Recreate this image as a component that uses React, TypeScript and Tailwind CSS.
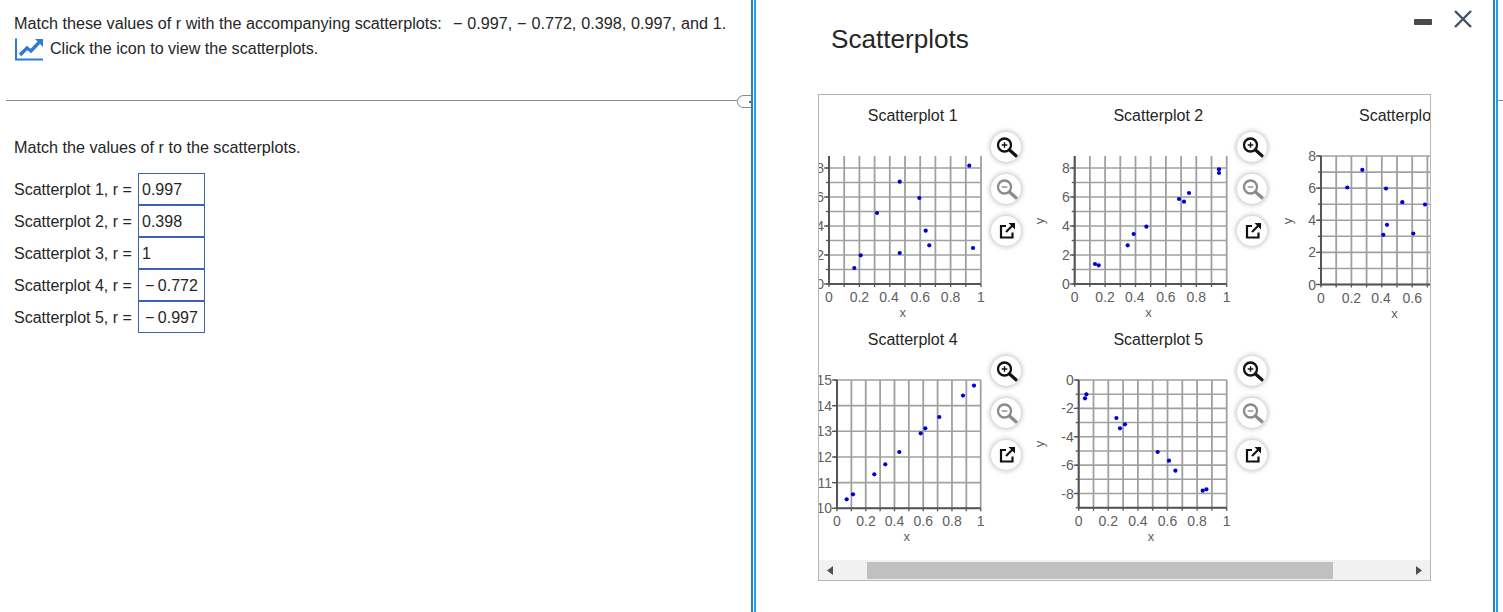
import React from "react";

type Pt = [number, number];
type ChartProps = {
  x0: number;
  w: number;
  h: number;
  vLines: number[];
  hLines: number[];
  yLabels: { y: number; t: string }[];
  xTicks: { x: number; t: string }[];
  pts: Pt[];
  yLabelX?: number;
  yLabelY: number;
  xLabelX: number;
};

const TOP = 26;
const gridColor = "#a0a0a0";
const axisColor = "#555555";
const labelColor = "#606060";

function Chart({ x0, w, h, vLines, hLines, yLabels, xTicks, pts, yLabelX, yLabelY, xLabelX }: ChartProps) {
  const bottom = TOP + h;
  return (
    <svg width="202" height="190" viewBox="0 0 202 190" className="shrink-0" style={{ fontFamily: '"Liberation Sans", Arial, sans-serif' }}>
      {vLines.map((v, i) => (
        <g key={i}>
          <line x1={x0 + v} x2={x0 + v} y1={TOP} y2={bottom} stroke={gridColor} strokeWidth="1.8" />
          <line x1={x0 + v} x2={x0 + v} y1={bottom} y2={bottom + 3} stroke={axisColor} strokeWidth="1.3" />
        </g>
      ))}
      {hLines.map((v, i) => (
        <g key={i}>
          <line x1={x0} x2={x0 + w} y1={bottom - v} y2={bottom - v} stroke={gridColor} strokeWidth="1.6" />
          <line x1={x0 - 3} x2={x0} y1={bottom - v} y2={bottom - v} stroke={axisColor} strokeWidth="1.3" />
        </g>
      ))}
      <line x1={x0} x2={x0} y1={TOP} y2={bottom + 1} stroke={axisColor} strokeWidth="2" />
      <line x1={x0} x2={x0 + w} y1={bottom} y2={bottom} stroke={axisColor} strokeWidth="2" />
      {yLabels.map((l) => (
        <g key={l.t}>
          <line x1={x0 - 5} x2={x0} y1={l.y} y2={l.y} stroke={axisColor} strokeWidth="1.3" />
          <text x={x0 - 5} y={l.y + 5} textAnchor="end" fontSize="14" fill={labelColor}>
            {l.t}
          </text>
        </g>
      ))}
      {xTicks.map((l) => (
        <text key={l.t} x={x0 + l.x} y={bottom + 18} textAnchor="middle" fontSize="14" fill={labelColor}>
          {l.t}
        </text>
      ))}
      <text x={x0 + xLabelX} y={bottom + 33} textAnchor="middle" fontSize="13" fill={labelColor}>
        x
      </text>
      {yLabelX !== undefined && (
        <text transform={`translate(${x0 + yLabelX} ${yLabelY}) rotate(-90)`} textAnchor="middle" fontSize="13" fill={labelColor}>
          y
        </text>
      )}
      {pts.map(([x, y], i) => (
        <circle key={i} cx={x0 + x} cy={bottom - y} r="2.1" fill="#0000d6" />
      ))}
    </svg>
  );
}

function range(n: number, step: number) {
  return Array.from({ length: n }, (_, i) => i * step);
}

function RoundButton({ children }: { children: React.ReactNode }) {
  return (
    <div className="flex h-[30px] w-[30px] items-center justify-center rounded-full bg-white shadow-[0_0_5px_1px_rgba(0,0,0,0.25)]">
      {children}
    </div>
  );
}

function ChartButtons() {
  return (
    <div className="flex flex-col gap-[12px] pt-[2px]">
      <RoundButton>
        <svg width="30" height="30" viewBox="0 0 30 30" fill="none" stroke="#111111">
          <circle cx="13.5" cy="13" r="6.5" strokeWidth="2.3" />
          <line x1="18.5" y1="18" x2="25" y2="23.8" strokeWidth="3.2" strokeLinecap="round" />
          <path d="M10.7 13h5.6M13.5 10.2v5.6" strokeWidth="1.4" />
        </svg>
      </RoundButton>
      <RoundButton>
        <svg width="30" height="30" viewBox="0 0 30 30" fill="none" stroke="#8a8a8a">
          <circle cx="13.5" cy="13" r="6.5" strokeWidth="2.3" />
          <line x1="18.5" y1="18" x2="25" y2="23.8" strokeWidth="3.2" strokeLinecap="round" />
          <path d="M10.7 13h5.6" strokeWidth="1.4" />
        </svg>
      </RoundButton>
      <RoundButton>
        <svg width="30" height="30" viewBox="0 0 30 30" fill="none" stroke="#111111">
          <path d="M15 10H10V21.5H21.5V16.5" strokeWidth="2.2" />
          <path d="M15 16L23 8" strokeWidth="2.2" />
          <path d="M17.5 7H24V13.5Z" fill="#111111" stroke="none" />
        </svg>
      </RoundButton>
    </div>
  );
}

function Cell({ title, chart }: { title: string; chart: ChartProps }) {
  return (
    <div className="h-[224px] pt-[11px]">
      <div className="h-[20px] pl-[1px] text-center text-[16px] leading-[20px] text-[#262626] whitespace-nowrap">{title}</div>
      <div className="mt-[4px] flex">
        <Chart {...chart} />
        <ChartButtons />
      </div>
    </div>
  );
}

const xLabels152 = [
  { x: 0, t: "0" },
  { x: 30.4, t: "0.2" },
  { x: 60, t: "0.4" },
  { x: 91.2, t: "0.6" },
  { x: 121.6, t: "0.8" },
  { x: 152, t: "1" },
];

const chart1: ChartProps = {
  x0: 40,
  w: 152,
  h: 128,
  vLines: range(11, 15.2),
  hLines: range(9, 14.5),
  yLabels: [0, 2, 4, 6, 8].map((n) => ({ y: 154 - n * 14.5, t: String(n) })),
  xTicks: xLabels152,
  pts: [[25.3, 16], [31.7, 28.7], [48, 71], [70.7, 102.3], [70.7, 31], [90.3, 86], [96.7, 53.3], [100.3, 38.7], [140.3, 118.3], [144, 36]],
  yLabelX: -30.7,
  yLabelY: 91,
  xLabelX: 73.7,
};
const chart2: ChartProps = {
  ...chart1,
  x0: 39.7,
  pts: [[20.3, 20], [24, 18.7], [53, 38.7], [59, 50], [71.7, 57.3], [104.3, 85], [109.3, 82.3], [114.3, 91], [144.3, 114.7], [144.3, 111]],
};
const chart3: ChartProps = {
  x0: 40,
  w: 152,
  h: 128.5,
  vLines: range(11, 15.2),
  hLines: range(9, 16.06),
  yLabels: [0, 2, 4, 6, 8].map((n) => ({ y: 154.5 - n * 16.06, t: String(n) })),
  xTicks: xLabels152,
  pts: [[26.3, 97], [41.3, 114.7], [65, 96], [66, 59.7], [62.3, 49.7], [81.3, 82.3], [92.3, 51], [104, 80]],
  yLabelX: -28.7,
  yLabelY: 91,
  xLabelX: 73.6,
};
const chart4: ChartProps = {
  x0: 48,
  w: 143.7,
  h: 128.3,
  vLines: range(11, 14.37),
  hLines: range(6, 25.66),
  yLabels: [10, 11, 12, 13, 14, 15].map((n) => ({ y: 154.3 - (n - 10) * 25.66, t: String(n) })),
  xTicks: [
    { x: 0, t: "0" },
    { x: 29, t: "0.2" },
    { x: 57.5, t: "0.4" },
    { x: 86.2, t: "0.6" },
    { x: 115, t: "0.8" },
    { x: 143.7, t: "1" },
  ],
  pts: [[9.7, 9], [16, 14], [37.3, 34], [48.3, 44], [62.3, 56.3], [83.7, 75], [88.3, 80], [102.3, 91.3], [126, 112.7], [137, 122.7]],
  yLabelY: 91,
  xLabelX: 69.7,
};
const h5 = 127.7;
const chart5: ChartProps = {
  x0: 43.7,
  w: 148,
  h: h5,
  vLines: range(11, 14.8),
  hLines: range(10, h5 / 9),
  yLabels: [0, -2, -4, -6, -8].map((n) => ({ y: 26 - (n * h5) / 9, t: String(n) })),
  xTicks: [
    { x: 0, t: "0" },
    { x: 29.6, t: "0.2" },
    { x: 59.2, t: "0.4" },
    { x: 88.8, t: "0.6" },
    { x: 118.4, t: "0.8" },
    { x: 148, t: "1" },
  ],
  pts: ([[7.7, 14.3], [6.3, 18.3], [37.7, 38], [41.3, 48.3], [46.3, 44.3], [79, 72], [90.3, 80.7], [96.7, 90.7], [124, 110.7], [127.7, 109.3]] as Pt[]).map(
    ([x, y]) => [x, h5 - y] as Pt,
  ),
  yLabelX: -34.7,
  yLabelY: 90,
  xLabelX: 72.3,
};

const rows = [
  { label: "Scatterplot 1, r =", value: "0.997", pad: "pl-[3px]" },
  { label: "Scatterplot 2, r =", value: "0.398", pad: "pl-[3px]" },
  { label: "Scatterplot 3, r =", value: "1", pad: "pl-[3px]" },
  { label: "Scatterplot 4, r =", value: "− 0.772", pad: "pl-[6px]" },
  { label: "Scatterplot 5, r =", value: "− 0.997", pad: "pl-[6px]" },
];

function BlueRule() {
  return (
    <div className="flex h-full shrink-0">
      <div className="w-[2px] bg-[#2a80bd]" />
      <div className="w-[1px] bg-white" />
      <div className="w-[2px] bg-[#249fe4]" />
    </div>
  );
}

export default function App() {
  return (
    <div
      className="flex h-[612px] w-[1503px] overflow-hidden bg-white text-[16px] text-[#262626]"
      style={{ fontFamily: '"Liberation Sans", Arial, sans-serif' }}
    >
      <div className="w-[751px] shrink-0">
        <div className="h-[100px] pl-[14px] pt-[11px]">
          <p className="whitespace-nowrap text-[16.18px] leading-[24px]">
            Match these values of r with the accompanying scatterplots:
            <span className="ml-[11px] [word-spacing:0.4px]">− 0.997, − 0.772, 0.398, 0.997, and 1.</span>
          </p>
          <p className="flex items-center gap-[7px] text-[16.1px] leading-[24px]">
            <svg width="28" height="24" viewBox="0 0 28 24" fill="none" stroke="#2f7bd4" className="ml-[1px] mt-[2px] shrink-0">
              <path d="M1 1.5V22.5H28" strokeWidth="2" />
              <path d="M5 18L12 11L16 14L24 5.5" strokeWidth="3.4" />
              <path d="M20 2H28V10Z" fill="#2f7bd4" stroke="none" />
            </svg>
            <span className="whitespace-nowrap">Click the icon to view the scatterplots.</span>
          </p>
        </div>
        <div className="relative ml-[6px] h-[1px] w-[731px] bg-[#8a8a8a]">
          <div className="absolute left-[731px] top-[-5px] flex h-[13px] w-[14px] items-center justify-end rounded-l-[7px] border border-r-0 border-[#8a8a8a] bg-white">
            <div className="h-[2px] w-[2px] bg-[#666666]" />
          </div>
        </div>
        <div className="pl-[14px] pt-[35px]">
          <p className="text-[16.16px] leading-[22px]">Match the values of r to the scatterplots.</p>
          <div className="mt-[15px] flex flex-col">
            {rows.map((r) => (
              <div key={r.label} className="flex h-[32px] items-center">
                <span className="w-[124px] whitespace-nowrap pt-[2px]">{r.label}</span>
                <span className={`flex h-[32px] w-[67px] items-center border border-[#3a62b8] pt-[2px] ${r.pad} whitespace-pre [word-spacing:-1px]`}>
                  {r.value}
                </span>
              </div>
            ))}
          </div>
        </div>
      </div>

      <BlueRule />

      <div className="flex w-[737px] shrink-0 flex-col">
        <div className="flex h-[94px] items-start justify-between pl-[75px] pr-[21px]">
          <h1 className="pt-[24px] text-[26.1px] font-normal leading-[30px] text-[#262626]">Scatterplots</h1>
          <div className="flex items-center gap-[22px] pt-[10px]">
            <svg width="18" height="18" viewBox="0 0 18 18">
              <rect x="0" y="9" width="18" height="6" rx="1" fill="#4a4a4a" />
            </svg>
            <svg width="18" height="18" viewBox="0 0 18 18" stroke="#44525e" strokeWidth="2.4" fill="none">
              <path d="M1 1L17 17M17 1L1 17" />
            </svg>
          </div>
        </div>
        <div className="ml-[62px] flex h-[487px] w-[613px] flex-col border border-[#b5b5b5]">
          <div className="h-[465px] overflow-hidden">
            <div className="ml-[-29.7px] grid grid-cols-[245.67px_245.67px_245.67px]">
              <Cell title="Scatterplot 1" chart={chart1} />
              <Cell title="Scatterplot 2" chart={chart2} />
              <Cell title="Scatterplot 3" chart={chart3} />
              <Cell title="Scatterplot 4" chart={chart4} />
              <Cell title="Scatterplot 5" chart={chart5} />
            </div>
          </div>
          <div className="flex h-[20px] items-center bg-[#f1f1f1]">
            <div className="flex h-full w-[48px] items-center pl-[8px]">
              <svg width="6" height="9" viewBox="0 0 6 9"><path d="M6 0V9L0 4.5Z" fill="#505050" /></svg>
            </div>
            <div className="h-[17px] w-[466px] bg-[#c0c0c0]" />
            <div className="flex h-full flex-1 items-center justify-end pr-[8px]">
              <svg width="6" height="9" viewBox="0 0 6 9"><path d="M0 0V9L6 4.5Z" fill="#505050" /></svg>
            </div>
          </div>
        </div>
      </div>

      <BlueRule />

      <div className="flex-1 pt-[100px]">
        <div className="h-[1px] bg-[#8a8a8a]" />
      </div>
    </div>
  );
}
